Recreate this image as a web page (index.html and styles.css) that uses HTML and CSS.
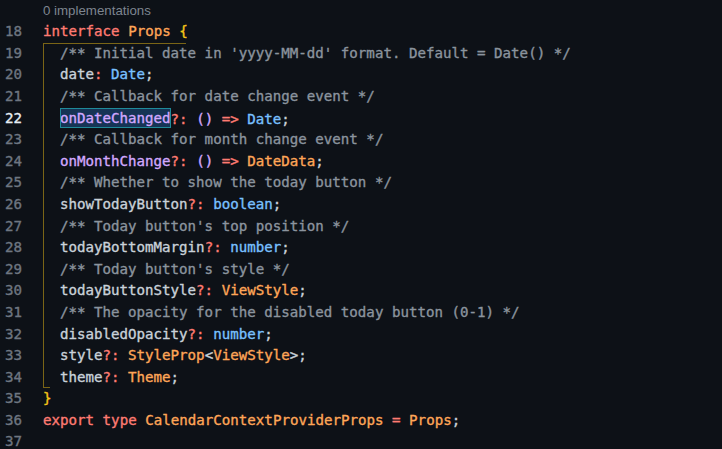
FILE: index.html
```html
<!DOCTYPE html>
<html>
<head>
<meta charset="utf-8">
<link rel="stylesheet" href="styles.css">
</head>
<body>
<div class="editor">
  <div class="lens-row"><span class="gut"></span><span class="lens">0 implementations</span></div>
  <div class="line"><span class="gut">18</span><span class="code"><span class="kw">interface</span> <span class="ty">Props</span> <span class="br">{</span></span></div>
  <div class="block">
    <div class="line"><span class="gut">19</span><span class="code in"><span class="cm">/** Initial date in 'yyyy-MM-dd' format. Default = Date() */</span></span></div>
    <div class="line"><span class="gut">20</span><span class="code in">date<span class="kw">:</span> <span class="bl">Date</span>;</span></div>
    <div class="line"><span class="gut">21</span><span class="code in"><span class="cm">/** Callback for date change event */</span></span></div>
    <div class="line"><span class="gut cur">22</span><span class="code in"><span class="sel fn">onDateChanged</span><span class="kw">?:</span> <span class="pu">()</span> <span class="kw">=&gt;</span> <span class="bl">Date</span>;</span></div>
    <div class="line"><span class="gut">23</span><span class="code in"><span class="cm">/** Callback for month change event */</span></span></div>
    <div class="line"><span class="gut">24</span><span class="code in"><span class="fn">onMonthChange</span><span class="kw">?:</span> <span class="pu">()</span> <span class="kw">=&gt;</span> <span class="ty">DateData</span>;</span></div>
    <div class="line"><span class="gut">25</span><span class="code in"><span class="cm">/** Whether to show the today button */</span></span></div>
    <div class="line"><span class="gut">26</span><span class="code in">showTodayButton<span class="kw">?:</span> <span class="bl">boolean</span>;</span></div>
    <div class="line"><span class="gut">27</span><span class="code in"><span class="cm">/** Today button's top position */</span></span></div>
    <div class="line"><span class="gut">28</span><span class="code in">todayBottomMargin<span class="kw">?:</span> <span class="bl">number</span>;</span></div>
    <div class="line"><span class="gut">29</span><span class="code in"><span class="cm">/** Today button's style */</span></span></div>
    <div class="line"><span class="gut">30</span><span class="code in">todayButtonStyle<span class="kw">?:</span> <span class="ty">ViewStyle</span>;</span></div>
    <div class="line"><span class="gut">31</span><span class="code in"><span class="cm">/** The opacity for the disabled today button (0-1) */</span></span></div>
    <div class="line"><span class="gut">32</span><span class="code in">disabledOpacity<span class="kw">?:</span> <span class="bl">number</span>;</span></div>
    <div class="line"><span class="gut">33</span><span class="code in">style<span class="kw">?:</span> <span class="ty">StyleProp</span>&lt;<span class="ty">ViewStyle</span>&gt;;</span></div>
    <div class="line"><span class="gut">34</span><span class="code in">theme<span class="kw">?:</span> <span class="ty">Theme</span>;</span></div>
  </div>
  <div class="line"><span class="gut">35</span><span class="code"><span class="br">}</span></span></div>
  <div class="line"><span class="gut">36</span><span class="code"><span class="kw">export</span> <span class="kw">type</span> <span class="ty">CalendarContextProviderProps</span> <span class="kw">=</span> <span class="ty">Props</span>;</span></div>
  <div class="line"><span class="gut">37</span><span class="code"></span></div>
</div>
</body>
</html>
```
FILE: styles.css
```css
html, body {
  margin: 0;
  padding: 0;
  background: #0d1117;
}
.editor {
  width: 722px;
  height: 449px;
  overflow: hidden;
  background: #0d1117;
  font-family: "DejaVu Sans Mono", monospace;
  font-size: 14.15px;
  color: #c9d1d9;
  -webkit-text-stroke: 0.35px;
}
.lens-row {
  display: flex;
  height: 21.2px;
  align-items: center;
}
.lens {
  font-family: "Liberation Sans", Arial, sans-serif;
  font-size: 13.3px;
  color: #7d8590;
  -webkit-text-stroke: 0;
}
.line {
  display: flex;
  height: 21.6px;
  line-height: 21.6px;
  white-space: pre;
}
.gut {
  width: 22px;
  padding-right: 21px;
  text-align: right;
  color: #6e7681;
  flex: none;
}
.gut.cur {
  color: #e6edf3;
}
.code {
  flex: 1;
}
.in {
  padding-left: 16.9px;
}
.block {
  position: relative;
}
.block::before {
  content: "";
  position: absolute;
  left: 43px;
  top: 0;
  bottom: 0;
  border-left: 1px solid #7a6516;
}
.block::after {
  content: "";
  position: absolute;
  left: 43px;
  bottom: 0;
  width: 7px;
  border-bottom: 1px solid #7a6516;
}
.block > .line:first-child {
  position: relative;
}
.block > .line:first-child::before {
  content: "";
  position: absolute;
  left: 43px;
  top: 0;
  width: 143px;
  border-top: 1px solid #7a6516;
}
.kw { color: #ff7b72; }
.ty { color: #ffa657; }
.bl { color: #79c0ff; }
.fn { color: #d2a8ff; }
.pu { color: #d2a8ff; }
.cm { color: #8b949e; }
.br { color: #f5c518; }
.sel {
  background: #163455;
  outline: 1px solid #1f8a99;
  outline-offset: -1px;
  display: inline-block;
  height: 20px;
  line-height: 20px;
  margin-top: 0.8px;
}
```
